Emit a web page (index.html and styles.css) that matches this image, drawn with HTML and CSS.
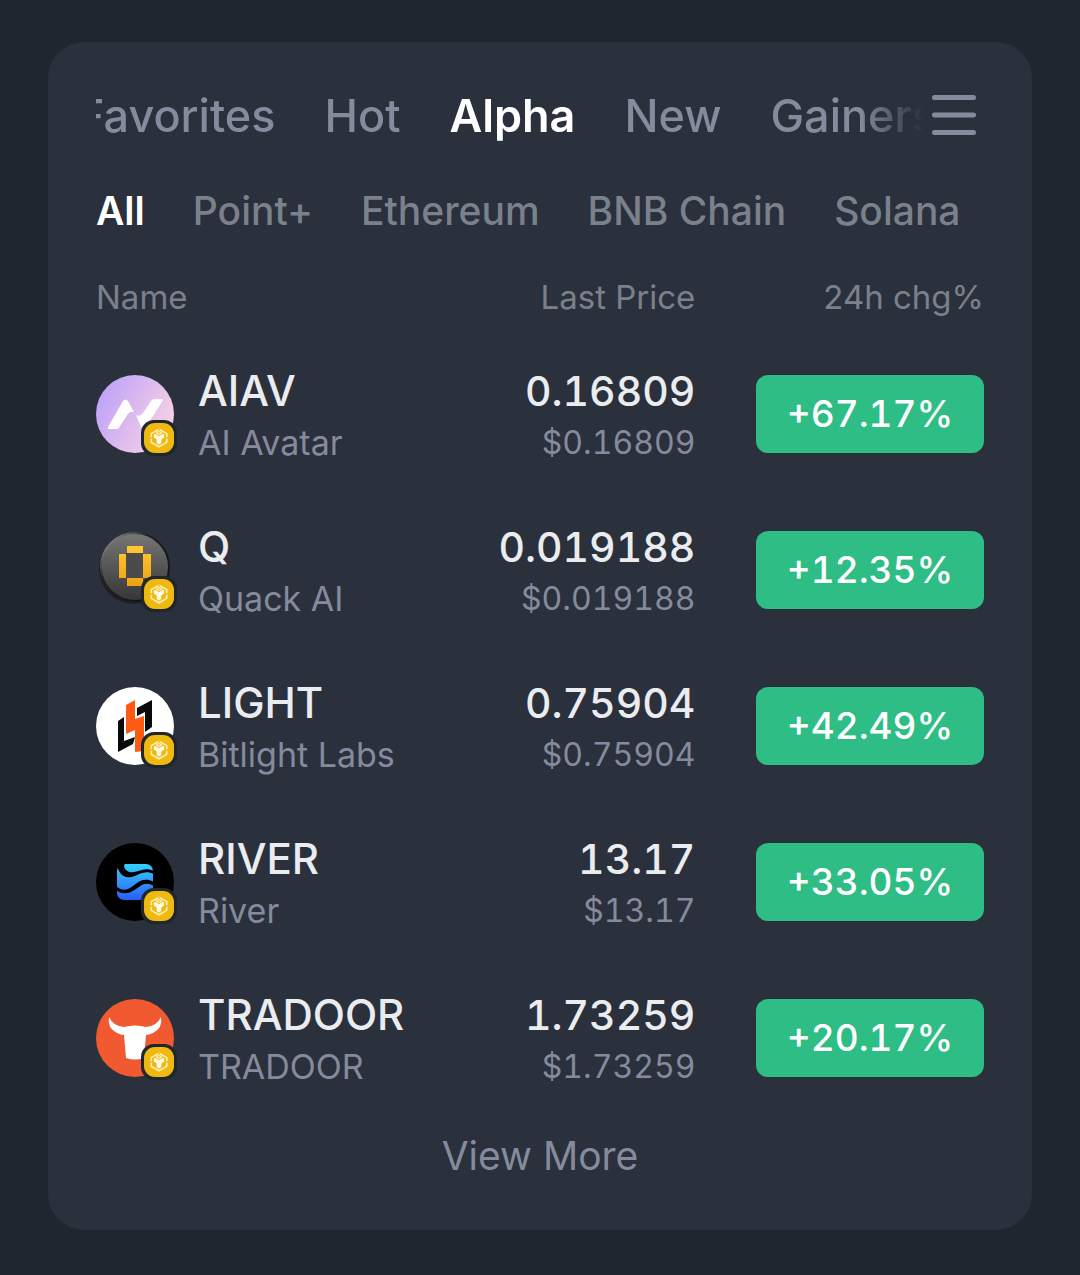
FILE: index.html
```html
<!DOCTYPE html>
<html lang="en">
<head>
<meta charset="utf-8">
<meta name="viewport" content="width=device-width, initial-scale=1">
<title>Markets</title>
<link rel="stylesheet" href="styles.css">
</head>
<body>
<svg class="defs" aria-hidden="true">
  <defs>
    <linearGradient id="lilac" x1="0" y1="0" x2="1" y2="0.5"><stop offset="0" stop-color="#b79cfa"/><stop offset="1" stop-color="#f5cfe6"/></linearGradient>
    <linearGradient id="coin" x1="0" y1="0" x2="0" y2="1"><stop offset="0" stop-color="#777"/><stop offset="1" stop-color="#353535"/></linearGradient>
    <linearGradient id="rim" x1="0" y1="0" x2="1" y2="1"><stop offset="0" stop-color="#b0b3b8"/><stop offset="0.35" stop-color="#222"/><stop offset="1" stop-color="#0c0c0e"/></linearGradient>
    <linearGradient id="gold" x1="0" y1="0" x2="0" y2="1"><stop offset="0" stop-color="#ffc936"/><stop offset="1" stop-color="#f0a010"/></linearGradient>
    <linearGradient id="water" x1="0" y1="0" x2="0" y2="1"><stop offset="0" stop-color="#35d0fa"/><stop offset="1" stop-color="#2a5cf8"/></linearGradient>
    <symbol id="chain" viewBox="0 0 36 36">
      <rect width="36" height="36" rx="13" fill="#20262d"/>
      <rect x="3" y="3" width="30" height="30" rx="11" fill="#efb90f"/>
      <path d="M18 9.200l7.700 4.400v8.800L18 26.800l-7.700-4.400v-8.800z" fill="none" stroke="#fff0b8" stroke-width="1.600"/>
      <g fill="#efb90f"><circle cx="18" cy="9.200" r="1"/><circle cx="25.700" cy="18" r="1"/><circle cx="10.300" cy="18" r="1"/></g>
      <path d="M18 11.500l2.600 1.500-2.600 1.600-2.600-1.600z" fill="none" stroke="#fff0b8" stroke-width="1.200"/>
      <path d="M12.800 14.600l1.700-.6 3.500 2.200 3.500-2.200 1.700.6v3L20.300 19.400v3.600L18 24.400 15.700 23v-3.600l-2.900-1.800z" fill="#fffbe8"/>
    </symbol>
  </defs>
</svg>
<main class="card">
  <header class="top">
    <nav class="tabs" aria-label="Market lists">
      <a href="#favorites">Favorites</a>
      <a href="#hot">Hot</a>
      <a href="#alpha" class="active" aria-current="page">Alpha</a>
      <a href="#new">New</a>
      <a href="#gainers">Gainers</a>
    </nav>
    <button class="menu" type="button" aria-label="Menu">
      <svg viewBox="0 0 44 40" width="44" height="40"><path d="M2.500 2.500h39M2.500 20h39M2.500 37.500h39" stroke="#858b9c" stroke-width="5" stroke-linecap="round"/></svg>
    </button>
  </header>
  <nav class="filters" aria-label="Networks">
    <a href="#all" class="active" aria-current="true">All</a>
    <a href="#point">Point+</a>
    <a href="#ethereum">Ethereum</a>
    <a href="#bnb">BNB Chain</a>
    <a href="#solana">Solana</a>
  </nav>
  <table class="coins">
    <thead>
      <tr><th scope="col" class="name-col">Name</th><th scope="col" class="num price-col">Last Price</th><th scope="col" class="num">24h chg%</th></tr>
    </thead>
    <tbody>
      <tr>
        <td><div class="coin">
          <span class="logo"><svg viewBox="0 0 78 78"><circle cx="39" cy="39" r="39" fill="url(#lilac)"/><path d="M12 52 27 26q2-3 5 0l6 11q-4-1-6 2l-8 12q-1 3-4 3h-7q-2 0-1-2zM40 40q4 2 7-2l8-12q1-2 4-2h6q3 0 1 3L50 52q-3 4-5 0z" fill="#fff"/></svg><svg class="badge"><use href="#chain"/></svg></span>
          <span class="pair"><span class="main">AIAV</span><span class="sub">AI Avatar</span></span>
        </div></td>
        <td class="num"><span class="pair"><span class="main">0.16809</span><span class="sub">$0.16809</span></span></td>
        <td class="num"><span class="change">+67.17%</span></td>
      </tr>
      <tr>
        <td><div class="coin">
          <span class="logo"><svg viewBox="0 0 78 78"><circle cx="38" cy="38" r="35" fill="#1c2026"/><circle cx="39" cy="36" r="34" fill="url(#coin)" stroke="url(#rim)" stroke-width="2"/><path d="M30 22h17v25H30z" fill="#4b4b4d"/><path d="M31 15h16v7H31zM23 23h7v24h-7zM47 23h8v24h-8zM31 47h16v8H31z" fill="url(#gold)"/></svg><svg class="badge"><use href="#chain"/></svg></span>
          <span class="pair"><span class="main">Q</span><span class="sub">Quack AI</span></span>
        </div></td>
        <td class="num"><span class="pair"><span class="main">0.019188</span><span class="sub">$0.019188</span></span></td>
        <td class="num"><span class="change">+12.35%</span></td>
      </tr>
      <tr>
        <td><div class="coin">
          <span class="logo"><svg viewBox="0 0 78 78"><circle cx="39" cy="39" r="39" fill="#fff"/><path d="M22 34l6-4v24l11-4-2 7-15 8zM41 21l15-8v27l-7 5V25l-8 4z" fill="#0a0a0a"/><path d="M30 18l9-5v19l9-3v35l-9 1V43l-9 4z" fill="#ff5a14"/></svg><svg class="badge"><use href="#chain"/></svg></span>
          <span class="pair"><span class="main">LIGHT</span><span class="sub">Bitlight Labs</span></span>
        </div></td>
        <td class="num"><span class="pair"><span class="main">0.75904</span><span class="sub">$0.75904</span></span></td>
        <td class="num"><span class="change">+42.49%</span></td>
      </tr>
      <tr>
        <td><div class="coin">
          <span class="logo"><svg viewBox="0 0 78 78"><circle cx="39" cy="39" r="39" fill="#000"/><rect x="21" y="21" width="36" height="36" rx="7" fill="url(#water)"/><path d="M21 20h8q-3 6 4 9c9 2 14-6 25-1v3c-9-4-14 0-19 2-11 4-16-2-18-11zM20 43c4 4 9 5 14 2 7-4 12-12 24-6v4c-8-5-13-1-18 3-7 5-14 6-20 1z" fill="#000"/></svg><svg class="badge"><use href="#chain"/></svg></span>
          <span class="pair"><span class="main">RIVER</span><span class="sub">River</span></span>
        </div></td>
        <td class="num"><span class="pair"><span class="main">13.17</span><span class="sub">$13.17</span></span></td>
        <td class="num"><span class="change">+33.05%</span></td>
      </tr>
      <tr>
        <td><div class="coin">
          <span class="logo"><svg viewBox="0 0 78 78"><circle cx="39" cy="39" r="39" fill="#f15a31"/><path d="M13 18q4 9 15 10 11-3 22 0 11-1 15-10 2 11-8 16-4 2-7 2l-2 23q-9 3-18 0l-2-23q-3 0-7-2-10-5-8-16z" fill="#fff"/></svg><svg class="badge"><use href="#chain"/></svg></span>
          <span class="pair"><span class="main">TRADOOR</span><span class="sub">TRADOOR</span></span>
        </div></td>
        <td class="num"><span class="pair"><span class="main">1.73259</span><span class="sub">$1.73259</span></span></td>
        <td class="num"><span class="change">+20.17%</span></td>
      </tr>
    </tbody>
  </table>
  <a class="more" href="#more">View More</a>
</main>
</body>
</html>
```
FILE: styles.css
```css
* { box-sizing: border-box; }

body {
  margin: 0;
  padding: 42px 48px 45px;
  background: #202630;
  color: #eaecef;
  font-family: Inter, "Liberation Sans", sans-serif;
}

a { color: inherit; text-decoration: none; }

.defs { position: absolute; width: 0; height: 0; }

.card {
  padding: 40px 48px 46px;
  border-radius: 36px;
  background: #2a303c;
}

.top {
  display: flex;
  align-items: center;
  justify-content: space-between;
  padding-right: 8px;
}

.tabs {
  display: flex;
  flex: 1;
  gap: 49px;
  min-width: 0;
  padding-top: 2px;
  overflow: hidden;
  color: #858b9c;
  font-size: 45px;
  font-weight: 500;
  line-height: 64px;
  white-space: nowrap;
  -webkit-mask-image: linear-gradient(to left, transparent, #000 64px);
  mask-image: linear-gradient(to left, transparent, #000 64px);
}

.tabs a:first-child { margin-left: -18px; }

.tabs .active,
.filters .active { color: #fff; font-weight: 600; }

.menu {
  display: flex;
  margin: 0 0 0 8px;
  padding: 0;
  border: 0;
  background: none;
}

.filters {
  display: flex;
  gap: 48px;
  margin-top: 35px;
  color: #7b818b;
  font-size: 39px;
  font-weight: 500;
  line-height: 56px;
  white-space: nowrap;
}

.coins {
  width: 100%;
  margin-top: 31px;
  border-collapse: collapse;
  table-layout: fixed;
}

.coins th {
  height: 66px;
  padding: 0 0 12px;
  color: #7b818b;
  font-size: 33px;
  font-weight: 400;
  line-height: 52px;
  text-align: left;
}

.name-col { width: 43%; }
.price-col { width: 24.5%; }

.coins .num { text-align: right; }
.coins td { height: 156px; padding: 0; vertical-align: middle; }
.coins td.num { font-variant-numeric: tabular-nums; }

.coin { display: flex; align-items: center; gap: 24px; }

.logo { position: relative; flex: none; width: 78px; height: 78px; }
.logo svg { display: block; width: 100%; height: 100%; }
.logo .badge { position: absolute; right: -3px; bottom: -3px; width: 36px; height: 36px; }

.pair { display: block; padding-top: 6px; }
.main, .sub { display: block; line-height: 52px; }
.main { font-size: 42px; font-weight: 500; }
.sub { color: #858b9c; font-size: 34px; }
.num .main { font-size: 41px; }
.num .sub { font-size: 32px; }

.change {
  display: inline-block;
  width: 228px;
  border-radius: 12px;
  background: #2ebd85;
  color: #fff;
  font-size: 37px;
  font-weight: 500;
  line-height: 78px;
  text-align: center;
  vertical-align: middle;
}

.more {
  display: block;
  margin-top: 12px;
  color: #858b9c;
  font-size: 39px;
  line-height: 56px;
  text-align: center;
}
```
